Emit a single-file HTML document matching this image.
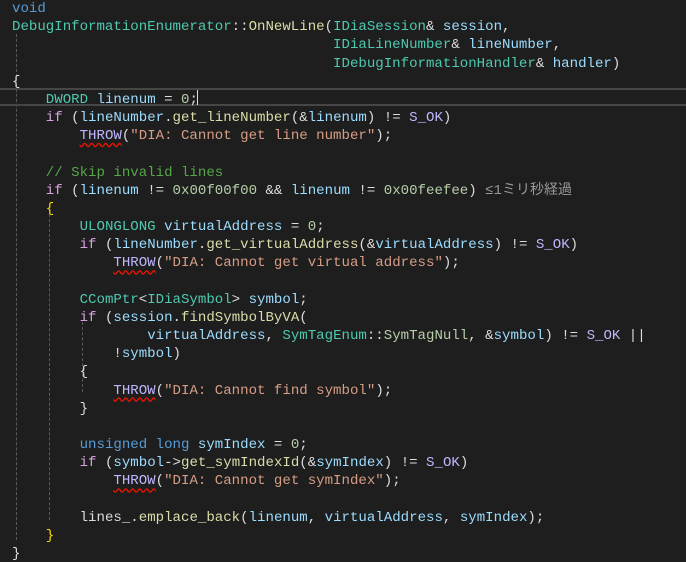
<!DOCTYPE html>
<html><head><meta charset="utf-8"><style>
html,body{margin:0;padding:0;background:#1e1e1e;width:686px;height:562px;overflow:hidden;position:relative}
pre{position:absolute;left:12px;top:0px;margin:0;font-family:"Liberation Mono","Noto Sans CJK JP",monospace;font-size:14.08px;line-height:18.17px;color:#dcdcdc;white-space:pre}
.k{color:#569cd6}.c{color:#d8a0df}.t{color:#4ec9b0}.f{color:#dcdcaa}.p{color:#9cdcfe}.s{color:#d69d85}.m{color:#beb7ff}.n{color:#b5cea8}.g{color:#57a64a}.y{color:#ffd700}
.sq{text-decoration:underline wavy #e51400;text-underline-offset:3px}
.lens{color:#999;font-size:14px}
.cur{position:absolute;left:0;top:88px;width:686px;height:14px;border-top:2px solid #464646;border-bottom:2px solid #464646}
.caret{position:absolute;left:197px;top:90px;width:1px;height:15px;background:#dcdcdc}
.ig{position:absolute;width:0;border-left:1px dashed #5a5a5a}
</style></head><body>
<div class="ig" style="left:16px;top:34px;height:506px"></div>
<div class="ig" style="left:49px;top:214px;height:306px"></div>
<div class="ig" style="left:82px;top:322px;height:70px"></div>
<div class="cur"></div><div class="caret"></div>
<pre><span class="k">void</span>
<span class="t">DebugInformationEnumerator</span>::<span class="f">OnNewLine</span>(<span class="t">IDiaSession</span>&amp; <span class="p">session</span>,
                                      <span class="t">IDiaLineNumber</span>&amp; <span class="p">lineNumber</span>,
                                      <span class="t">IDebugInformationHandler</span>&amp; <span class="p">handler</span>)
{
    <span class="t">DWORD</span> <span class="p">linenum</span> = <span class="n">0</span>;
    <span class="c">if</span> (<span class="p">lineNumber</span>.<span class="f">get_lineNumber</span>(&amp;<span class="p">linenum</span>) != <span class="m">S_OK</span>)
        <span class="m sq">THROW</span>(<span class="s">"DIA: Cannot get line number"</span>);

    <span class="g">// Skip invalid lines</span>
    <span class="c">if</span> (<span class="p">linenum</span> != <span class="n">0x00f00f00</span> &amp;&amp; <span class="p">linenum</span> != <span class="n">0x00feefee</span>) <span class="lens">≤1ミリ秒経過</span>
    <span class="y">{</span>
        <span class="t">ULONGLONG</span> <span class="p">virtualAddress</span> = <span class="n">0</span>;
        <span class="c">if</span> (<span class="p">lineNumber</span>.<span class="f">get_virtualAddress</span>(&amp;<span class="p">virtualAddress</span>) != <span class="m">S_OK</span>)
            <span class="m sq">THROW</span>(<span class="s">"DIA: Cannot get virtual address"</span>);

        <span class="t">CComPtr</span>&lt;<span class="t">IDiaSymbol</span>&gt; <span class="p">symbol</span>;
        <span class="c">if</span> (<span class="p">session</span>.<span class="f">findSymbolByVA</span>(
                <span class="p">virtualAddress</span>, <span class="t">SymTagEnum</span>::<span class="n">SymTagNull</span>, &amp;<span class="p">symbol</span>) != <span class="m">S_OK</span> ||
            !<span class="p">symbol</span>)
        {
            <span class="m sq">THROW</span>(<span class="s">"DIA: Cannot find symbol"</span>);
        }

        <span class="k">unsigned long</span> <span class="p">symIndex</span> = <span class="n">0</span>;
        <span class="c">if</span> (<span class="p">symbol</span>-&gt;<span class="f">get_symIndexId</span>(&amp;<span class="p">symIndex</span>) != <span class="m">S_OK</span>)
            <span class="m sq">THROW</span>(<span class="s">"DIA: Cannot get symIndex"</span>);

        <span style="color:#dadada">lines_</span>.<span class="f">emplace_back</span>(<span class="p">linenum</span>, <span class="p">virtualAddress</span>, <span class="p">symIndex</span>);
    <span class="y">}</span>
}</pre>
</body></html>
